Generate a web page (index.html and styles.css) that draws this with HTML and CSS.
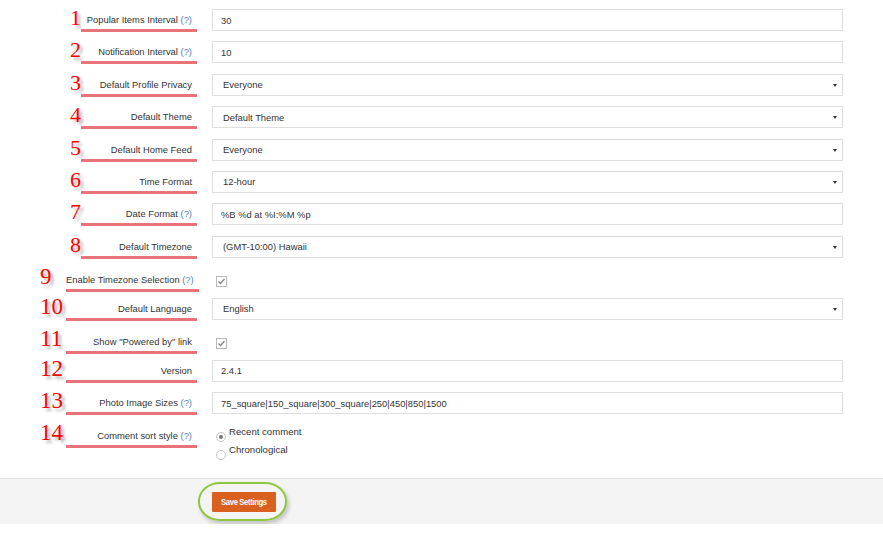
FILE: index.html
```html
<!DOCTYPE html>
<html lang="en">
<head>
    <meta charset="UTF-8">
    <meta name="viewport" content="width=device-width, initial-scale=1.0">
    <title>Site Settings</title>
    <link rel="stylesheet" href="styles.css">
</head>
<body>
    <form class="settings">
        <div class="row">
            <div class="label"><span class="num">1</span><span class="name">Popular Items Interval <span class="help">(?)</span></span></div>
            <input class="field" type="text" value="30">
        </div>
        <div class="row">
            <div class="label"><span class="num">2</span><span class="name">Notification Interval <span class="help">(?)</span></span></div>
            <input class="field" type="text" value="10">
        </div>
        <div class="row">
            <div class="label"><span class="num">3</span><span class="name">Default Profile Privacy</span></div>
            <div class="select"><select><option>Everyone</option></select></div>
        </div>
        <div class="row">
            <div class="label"><span class="num">4</span><span class="name">Default Theme</span></div>
            <div class="select"><select><option>Default Theme</option></select></div>
        </div>
        <div class="row">
            <div class="label"><span class="num">5</span><span class="name">Default Home Feed</span></div>
            <div class="select"><select><option>Everyone</option></select></div>
        </div>
        <div class="row">
            <div class="label"><span class="num">6</span><span class="name">Time Format</span></div>
            <div class="select"><select><option>12-hour</option></select></div>
        </div>
        <div class="row">
            <div class="label"><span class="num">7</span><span class="name">Date Format <span class="help">(?)</span></span></div>
            <input class="field" type="text" value="%B %d at %I:%M %p">
        </div>
        <div class="row">
            <div class="label"><span class="num">8</span><span class="name">Default Timezone</span></div>
            <div class="select"><select><option>(GMT-10:00) Hawaii</option></select></div>
        </div>
        <div class="row wide check">
            <div class="label"><span class="num">9</span><span class="name">Enable Timezone Selection <span class="help">(?)</span></span></div>
            <div><span class="box"><svg width="9" height="9" viewBox="0 0 9 9"><polyline points="1.5,4.5 3.5,6.5 7.5,2" fill="none" stroke="#888" stroke-width="1.4"/></svg></span></div>
        </div>
        <div class="row wide">
            <div class="label"><span class="num">10</span><span class="name">Default Language</span></div>
            <div class="select"><select><option>English</option></select></div>
        </div>
        <div class="row wide check">
            <div class="label"><span class="num">11</span><span class="name">Show "Powered by" link</span></div>
            <div><span class="box"><svg width="9" height="9" viewBox="0 0 9 9"><polyline points="1.5,4.5 3.5,6.5 7.5,2" fill="none" stroke="#888" stroke-width="1.4"/></svg></span></div>
        </div>
        <div class="row wide">
            <div class="label"><span class="num">12</span><span class="name">Version</span></div>
            <input class="field" type="text" value="2.4.1">
        </div>
        <div class="row wide">
            <div class="label"><span class="num">13</span><span class="name">Photo Image Sizes <span class="help">(?)</span></span></div>
            <input class="field" type="text" value="75_square|150_square|300_square|250|450|850|1500">
        </div>
        <div class="row wide radios">
            <div class="label"><span class="num">14</span><span class="name">Comment sort style <span class="help">(?)</span></span></div>
            <div class="options">
                <label class="option"><span class="dot on"></span><span>Recent comment</span></label>
                <label class="option"><span class="dot"></span><span>Chronological</span></label>
            </div>
        </div>
    </form>

    <div class="footer">
        <div class="btn-wrap">
            <button type="button" class="save"><span>Save Settings</span></button>
            <span class="ring"></span>
        </div>
    </div>
</body>
</html>
```

FILE: styles.css
```css
body {
    margin: 0;
    font-family: "Liberation Sans", Arial, sans-serif;
    font-size: 9.4px;
    color: #333;
    background: #fff;
}
.settings {
    display: flex;
    flex-direction: column;
    gap: 10.4px;
    padding-top: 9px;
}
.row {
    display: grid;
    grid-template-columns: 197px 1fr;
    column-gap: 15px;
    padding-right: 40px;
    height: 22px;
}
.row.check {
    height: 19.2px;
}
.row.radios {
    height: auto;
}
.label {
    display: flex;
    align-items: flex-start;
    padding-left: 70px;
}
.row.wide .label {
    padding-left: 40px;
}
.num {
    font-family: "Liberation Serif", "Times New Roman", serif;
    font-size: 22px;
    line-height: 22px;
    margin-top: -2px;
    color: #f00;
    text-shadow: 3px 3px 3px rgba(0, 0, 0, 0.3);
}
.row.wide .num {
    min-width: 26px;
    font-size: 23px;
}
.name {
    flex: 1;
    margin-top: 2px;
    line-height: 18px;
    text-align: right;
    white-space: nowrap;
    padding-right: 5px;
    border-bottom: 3px solid #e8747a;
}
.row.check .name,
.row.radios .name {
    margin-top: 3px;
}
.help {
    color: #5580b5;
}
.field,
.select select {
    width: 100%;
    height: 22px;
    box-sizing: border-box;
    border: 1px solid #dedede;
    background: #fff;
    font-family: inherit;
    font-size: 9.4px;
    color: #333;
    padding: 0 8px;
    margin: 0;
    outline: none;
}
.select {
    position: relative;
}
.select select {
    appearance: none;
    -webkit-appearance: none;
    padding-left: 10px;
}
.select::after {
    content: "";
    position: absolute;
    right: 6px;
    top: 10px;
    border-left: 2.5px solid transparent;
    border-right: 2.5px solid transparent;
    border-top: 3px solid #333;
}
.box {
    display: flex;
    align-items: center;
    justify-content: center;
    width: 11px;
    height: 11px;
    box-sizing: border-box;
    border: 1px solid #b9b9b9;
    margin: 8px 0 0 4px;
    background: #fff;
}
.options {
    display: flex;
    flex-direction: column;
    gap: 1.5px;
    padding: 2px 0 0 4px;
}
.option {
    display: flex;
    align-items: flex-end;
    gap: 3px;
    font-size: 9.6px;
}
.option span:last-child {
    line-height: 12px;
    margin-bottom: 4px;
}
.dot {
    width: 10px;
    height: 10px;
    box-sizing: border-box;
    border: 1px solid #c4c4c4;
    border-radius: 50%;
    display: flex;
    align-items: center;
    justify-content: center;
}
.dot.on::after {
    content: "";
    width: 4px;
    height: 4px;
    border-radius: 50%;
    background: #777;
}
.footer {
    margin-top: 18px;
    height: 45px;
    border-top: 1px solid #e2e2e2;
    background: #f4f4f4;
    padding: 13px 0 0 212px;
    box-sizing: content-box;
    height: 32px;
}
.btn-wrap {
    position: relative;
    display: inline-block;
}
.save {
    width: 64px;
    height: 20px;
    border: 0;
    border-radius: 1px;
    background: #d9601f;
    color: #fff;
    padding: 0;
    font-family: inherit;
    font-size: 9px;
    font-weight: bold;
    letter-spacing: -0.4px;
    display: block;
}
.save span {
    display: inline-block;
    transform: scaleX(0.85);
}
.ring {
    position: absolute;
    left: -14px;
    top: -10px;
    width: 89px;
    height: 39px;
    box-sizing: border-box;
    border: 2px solid #8dc63f;
    border-radius: 22px / 19px;
    box-shadow: 2px 3px 4px rgba(0, 0, 0, 0.2);
}
```
